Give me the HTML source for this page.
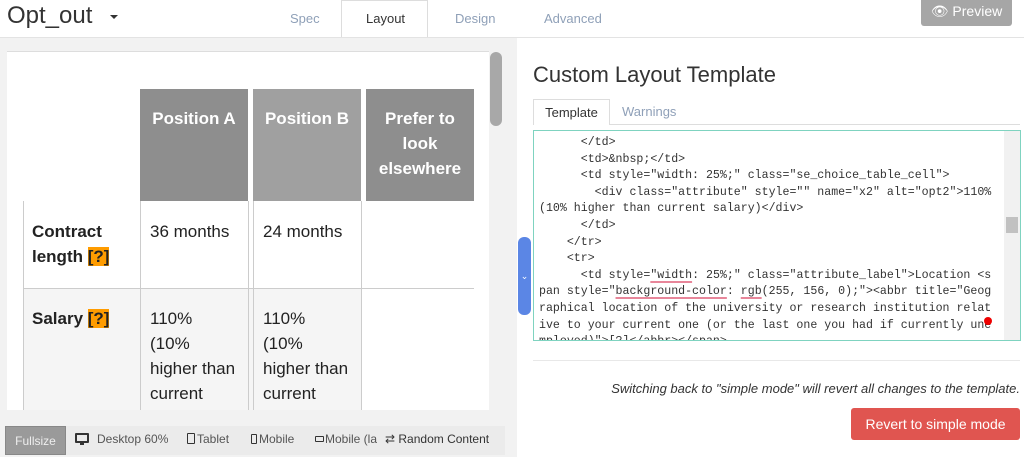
<!DOCTYPE html>
<html><head><style>
*{margin:0;padding:0;box-sizing:border-box}
body{width:1024px;height:457px;overflow:hidden;background:#fff;font-family:"Liberation Sans",sans-serif;position:relative;color:#333}
.a{position:absolute}
.code div{white-space:pre;height:16.6px;line-height:16.6px}
.hd{background:#8e8e8e;color:#fff;font-weight:bold;font-size:17px;text-align:center;line-height:25px;padding-top:17px}
.c{font-size:17px;color:#222;line-height:25px}
.q{background:#ff9c00;color:#222}
.tb{font-size:12px;color:#555;top:432px}
u{text-decoration-color:#e8869a;text-decoration-thickness:2px;text-underline-offset:3px}
</style></head><body>
<div class="a" style="left:7px;top:2px;font-size:24px;color:#333;font-weight:300">Opt_out</div>
<div class="a" style="left:110px;top:15px;width:0;height:0;border-left:4px solid transparent;border-right:4px solid transparent;border-top:4px solid #333"></div>
<div class="a" style="left:290px;top:11px;font-size:13px;color:#8fa0b8">Spec</div>
<div class="a" style="left:341px;top:0;width:87px;height:38px;border:1px solid #ddd;border-bottom:none;background:#fff"></div>
<div class="a" style="left:366px;top:11px;font-size:13px;color:#333">Layout</div>
<div class="a" style="left:455px;top:11px;font-size:13px;color:#8fa0b8">Design</div>
<div class="a" style="left:544px;top:11px;font-size:13px;color:#8fa0b8">Advanced</div>
<div class="a" style="left:921px;top:0;width:91px;height:26px;background:#a6a6a6;border-radius:0 0 3px 3px;color:#fff;font-size:14px;line-height:22px;text-align:center">&#128065; Preview</div>
<div class="a" style="left:0;top:37px;width:1024px;height:1px;background:#e3e3e3"></div>
<div class="a" style="left:0;top:38px;width:517px;height:419px;background:#f2f2f2"></div>
<div class="a" style="left:7px;top:51px;width:482px;height:359px;background:#fff;border-top:1px solid #ddd;overflow:hidden">
 <div class="a hd" style="left:133px;top:37px;width:108px;height:112px">Position A</div>
 <div class="a hd" style="left:246px;top:37px;width:108px;height:112px;background:#a0a0a0">Position B</div>
 <div class="a hd" style="left:359px;top:37px;width:108px;height:112px">Prefer to look elsewhere</div>
 <div class="a" style="left:16px;top:149px;width:451px;height:88px;border-left:1px solid #ccc;border-bottom:1px solid #ccc"></div>
 <div class="a" style="left:16px;top:237px;width:451px;height:130px;border-left:1px solid #ccc;background:#fff"></div>
 <div class="a" style="left:17px;top:237px;width:338px;height:130px;background:#f5f5f5"></div>
 <div class="a" style="left:133px;top:149px;width:1px;height:220px;background:#ccc"></div>
 <div class="a" style="left:241px;top:149px;width:1px;height:220px;background:#ccc"></div>
 <div class="a" style="left:246px;top:149px;width:1px;height:220px;background:#ccc"></div>
 <div class="a" style="left:354px;top:149px;width:1px;height:220px;background:#ccc"></div>
 <div class="a c" style="left:25px;top:167px;font-weight:bold">Contract<br>length <span class="q">[?]</span></div>
 <div class="a c" style="left:143px;top:167px">36 months</div>
 <div class="a c" style="left:256px;top:167px">24 months</div>
 <div class="a c" style="left:25px;top:254px;font-weight:bold">Salary <span class="q">[?]</span></div>
 <div class="a c" style="left:143px;top:254px">110%<br>(10%<br>higher than<br>current</div>
 <div class="a c" style="left:256px;top:254px">110%<br>(10%<br>higher than<br>current</div>
</div>
<div class="a" style="left:490px;top:52px;width:12px;height:74px;background:#a8a8a8;border-radius:6px"></div>
<div class="a" style="left:5px;top:426px;width:500px;height:29px;background:#ebebeb"></div>
<div class="a" style="left:5px;top:426px;width:61px;height:29px;background:#9a9a9a;color:#eee;font-size:12px;line-height:29px;text-align:center;border:1px solid #888">Fullsize</div>
<div class="a" style="left:75px;top:433px;width:14px;height:10px;border:2px solid #333;border-radius:1px"></div>
<div class="a" style="left:80px;top:443px;width:4px;height:2px;background:#333"></div>
<div class="a tb" style="left:97px">Desktop 60%</div>
<div class="a" style="left:187px;top:433px;width:8px;height:11px;border:1.5px solid #333;border-radius:1px"></div>
<div class="a tb" style="left:197px">Tablet</div>
<div class="a" style="left:251px;top:434px;width:6px;height:10px;border:1.5px solid #333;border-radius:1px"></div>
<div class="a tb" style="left:259px">Mobile</div>
<div class="a" style="left:315px;top:436px;width:9px;height:6px;border:1.5px solid #333;border-radius:1px"></div>
<div class="a tb" style="left:325px;width:52px;overflow:hidden;white-space:nowrap">Mobile (landscape)</div>
<div class="a tb" style="left:385px;color:#333">&#8644; Random Content</div>
<div class="a" style="left:533px;top:62px;font-size:22px;font-weight:300;color:#333">Custom Layout Template</div>
<div class="a" style="left:533px;top:124px;width:487px;height:1px;background:#ddd"></div>
<div class="a" style="left:533px;top:99px;width:77px;height:26px;border:1px solid #ddd;border-bottom:none;background:#fff;font-size:13px;line-height:25px;text-align:center;color:#333">Template</div>
<div class="a" style="left:622px;top:104px;font-size:13px;color:#8fa0b8">Warnings</div>
<div class="a code" style="left:533px;top:130px;width:488px;height:211px;border:1px solid #7fd3c0;overflow:hidden;font-family:'Liberation Mono',monospace;font-size:11.6px;color:#333;padding:4px 0 0 5px">
<div>      &lt;/td&gt;</div>
<div>      &lt;td&gt;&amp;nbsp;&lt;/td&gt;</div>
<div>      &lt;td style="width: 25%;" class="se_choice_table_cell"&gt;</div>
<div>        &lt;div class="attribute" style="" name="x2" alt="opt2"&gt;110%</div>
<div>(10% higher than current salary)&lt;/div&gt;</div>
<div>      &lt;/td&gt;</div>
<div>    &lt;/tr&gt;</div>
<div>    &lt;tr&gt;</div>
<div>      &lt;td style=<u>"width</u>: 25%;" class="attribute_label"&gt;Location &lt;s</div>
<div>pan style="<u>background-color</u>: <u>rgb</u>(255, 156, 0);"&gt;&lt;abbr title="Geog</div>
<div>raphical location of the university or research institution relat</div>
<div>ive to your current one (or the last one you had if currently une</div>
<div>mployed)"&gt;[?]&lt;/abbr&gt;&lt;/span&gt;</div>
<div class="a" style="left:470px;top:0;width:16px;height:210px;background:#f1f1f1"></div>
<div class="a" style="left:472px;top:86px;width:12px;height:16px;background:#c1c1c1"></div>
<div class="a" style="left:450px;top:186px;width:8px;height:8px;border-radius:50%;background:#e00"></div>
</div>
<div class="a" style="left:518px;top:237px;width:13px;height:78px;background:#5b86e5;border-radius:6px;color:#fff;font-size:9px;text-align:center;line-height:78px">&#8964;</div>
<div class="a" style="left:533px;top:360px;width:487px;height:1px;background:#e8e8e8"></div>
<div class="a" style="right:4px;top:381px;font-size:13px;font-style:italic;color:#333">Switching back to "simple mode" will revert all changes to the template.</div>
<div class="a" style="left:851px;top:408px;width:169px;height:32px;background:#e05550;border-radius:3px;color:#fff;font-size:14px;line-height:32px;text-align:center">Revert to simple mode</div>
</body></html>
